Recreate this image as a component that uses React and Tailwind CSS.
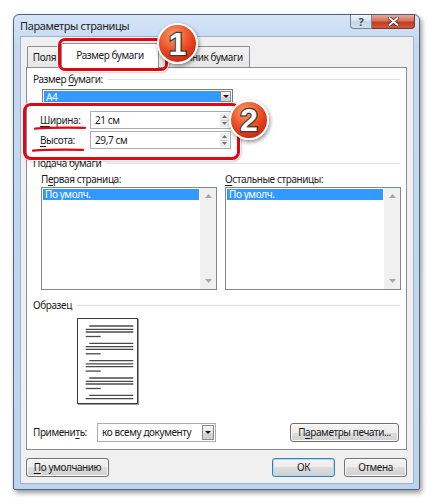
import React from 'react'

// tiny triangle used by scroll bars, spinners and combo boxes
function Tri({ dir = 'down', w = 7, h = 4, color = '#000' }) {
  const pts = dir === 'down' ? `0,0 ${w},0 ${w / 2},${h}` : `0,${h} ${w},${h} ${w / 2},0`
  return (
    <svg width={w} height={h} className="block">
      <polygon points={pts} fill={color} />
    </svg>
  )
}

function U({ children }) {
  return <span className="underline decoration-1 underline-offset-[2px]">{children}</span>
}

function DropBtn({ className = '' }) {
  return (
    <div className={`flex items-center justify-center border border-[#8a8a8a] bg-[linear-gradient(#f6f6f6,#e6e6e6_50%,#d6d6d6_50%,#cdcdcd)] ${className}`}>
      <Tri w={6} h={3} color="#1a1a1a" />
    </div>
  )
}

function Spin() {
  return (
    <div className="my-[1px] mr-[1px] flex w-[9px] flex-col self-stretch">
      <div className="flex flex-1 items-center justify-center bg-[#ededed]">
        <Tri dir="up" w={5} h={3} color="#707070" />
      </div>
      <div className="flex flex-1 items-center justify-center border-t border-[#d4d4d4] bg-[#ededed]">
        <Tri w={5} h={3} color="#707070" />
      </div>
    </div>
  )
}

// group caption followed by an etched line
function Group({ children, className = '' }) {
  return (
    <div className={`flex h-[12px] items-center gap-[5px] px-[6px] ${className}`}>
      <span className="whitespace-nowrap leading-none">{children}</span>
      <div className="h-px flex-1 bg-[#dcdfe3]" />
    </div>
  )
}

function ListBox() {
  return (
    <div className="flex h-[103px] border border-[#828790] bg-white">
      <div className="flex-1 p-[1px]">
        <div className="h-[11px] bg-[#3399ff] pl-[2px] leading-[11px] text-white">По умолч.</div>
      </div>
      <div className="flex w-[16px] flex-col items-center justify-between bg-[#f0f0f0] py-[6px]">
        <Tri dir="up" w={7} h={4} color="#a8a8a8" />
        <Tri w={7} h={4} color="#a8a8a8" />
      </div>
    </div>
  )
}

function Btn({ children, className = '', def = false }) {
  return (
    <div
      className={`flex h-[19px] items-center justify-center rounded-[3px] border bg-[linear-gradient(#f4f4f4,#ececec_50%,#dedede_50%,#d0d0d0)] ${
        def ? 'border-[#3c7fb1] shadow-[inset_0_0_0_1px_#a6dcf6]' : 'border-[#707070] shadow-[inset_0_0_0_1px_#fbfbfb]'
      } ${className}`}
    >
      {children}
    </div>
  )
}

function Badge({ n, className = '' }) {
  return (
    <div
      className={`absolute flex items-center justify-center rounded-full border-2 border-white bg-[radial-gradient(circle_at_40%_28%,#f9a066,#e9481f_50%,#b3130a)] shadow-[1px_2px_4px_rgba(0,0,0,0.45)] ${className}`}
    >
      <span className="font-['Liberation_Sans',sans-serif] text-[32px] font-bold leading-none tracking-normal text-white [-webkit-text-stroke:2.5px_#3a3a3a] [paint-order:stroke_fill]">
        {n}
      </span>
    </div>
  )
}

function Scribble({ className = '' }) {
  return (
    <svg width="52" height="4" className={`absolute ${className}`}>
      <path d="M1 2.6 Q 20 1.2 51 1.8" stroke="#e30613" strokeWidth="2.2" fill="none" strokeLinecap="round" />
    </svg>
  )
}

// preview page with text lines
function SamplePage() {
  const groups = [7, 24.3, 41.6, 59, 76.3]
  return (
    <div className="ml-[50px] mt-[7px] h-[86px] w-[61px] border border-[#3b3b3b] bg-white shadow-[1px_1px_0_#9a9a9a]">
      <svg width="59" height="84" className="block">
        {groups.map((y, i) => (
          <g key={i} stroke="#4a4a4a" strokeWidth="1.3">
            <line x1="11.3" x2="55.3" y1={y} y2={y} />
            <line x1="7.7" x2="55.3" y1={y + 3.3} y2={y + 3.3} />
            {i < 4 && <line x1="7.7" x2="55.3" y1={y + 6} y2={y + 6} />}
            {i < 4 && <line x1="7.7" x2="22.7" y1={y + 10.5} y2={y + 10.5} />}
          </g>
        ))}
      </svg>
    </div>
  )
}

export default function App() {
  return (
    <div className="relative h-[504px] w-[434px] overflow-hidden bg-white pl-[13px] pt-[14px] font-['Noto_Sans',sans-serif] text-[10px] tracking-[-0.4px] text-[#1b1b1b]">
      {/* window frame */}
      <div className="flex h-[476px] w-[407px] flex-col rounded-t-[6px] rounded-b-[2px] border border-[#52627c] bg-[linear-gradient(#d6e5f7,#c4d9f1_30px,#bdd4ef)] shadow-[2px_3px_5px_rgba(0,0,0,0.4)]">
        {/* title bar */}
        <div className="flex h-[21px] shrink-0">
          <span className="pl-[6px] pt-[5px] text-[11px] leading-none text-[#1e1e1e]">Параметры страницы</span>
          <div className="ml-auto mr-[4px] flex h-[14px]">
            <div className="flex w-[22px] items-center justify-center rounded-bl-[4px] border border-t-0 border-[#74839a] bg-[linear-gradient(#eef3f9,#d6e1ee_50%,#c7d5e6_50%,#d3deeb)] text-[11px] font-bold leading-none text-[#3d4f6b]">
              ?
            </div>
            <div className="flex w-[43px] items-center justify-center rounded-br-[4px] border border-l-0 border-t-0 border-[#7a3426] bg-[linear-gradient(#e9a897,#d6725c_45%,#c13c22_55%,#d0593d)]">
              <svg width="11" height="9">
                <path d="M1.5 1 L9.5 8 M9.5 1 L1.5 8" stroke="#3b1a14" strokeWidth="3.4" strokeLinecap="round" />
                <path d="M1.5 1 L9.5 8 M9.5 1 L1.5 8" stroke="#fff" strokeWidth="2" strokeLinecap="round" />
              </svg>
            </div>
          </div>
        </div>

        {/* client area */}
        <div className="mb-[5px] ml-[6px] mr-[5px] flex flex-1 flex-col border border-[#9fb2cb] bg-[#f0f0f0]">
          {/* tabs */}
          <div className="relative flex h-[30px] items-end pl-[6px]">
            <div className="flex h-[21px] w-[35px] items-center justify-center rounded-t-[2px] border border-b-0 border-[#8e8f8f] bg-[linear-gradient(#f3f3f3,#e5e5e5)]">
              Поля
            </div>
            <div className="-mx-[1px] -mb-px flex h-[25px] w-[98px] items-center justify-center rounded-t-[2px] border border-b-0 border-[#8e8f8f] bg-white pb-[1px]">
              Размер бумаги
            </div>
            <div className="flex h-[21px] w-[92px] items-center justify-center rounded-t-[2px] border border-b-0 border-[#8e8f8f] bg-[linear-gradient(#f3f3f3,#e5e5e5)]">
              Источник бумаги
            </div>
          </div>

          {/* tab panel */}
          <div className="ml-[5px] mr-[6px] flex h-[383px] flex-col border border-[#898c95] bg-white">
            <Group className="mt-[5px]">
              Размер <U>б</U>умаги:
            </Group>
            <div className="ml-[15px] mt-[4px] flex h-[15px] w-[191px] border border-[#7a7a7a] bg-white p-[1px]">
              <div className="flex-1 bg-[#3399ff] pl-[2px] leading-[12px] text-white">A4</div>
              <DropBtn className="w-[11px]" />
            </div>

            <div className="ml-[13px] mt-[7px] flex h-[18px] items-center">
              <span className="w-[50px]">
                <U>Ш</U>ирина:
              </span>
              <div className="flex h-full w-[141px] items-center border border-[#abadb3] bg-white">
                <span className="flex-1 pl-[4px]">21 см</span>
                <Spin />
              </div>
            </div>
            <div className="ml-[13px] mt-[2px] flex h-[18px] items-center">
              <span className="w-[50px]">
                <U>В</U>ысота:
              </span>
              <div className="flex h-full w-[141px] items-center border border-[#abadb3] bg-white">
                <span className="flex-1 pl-[4px]">29,7 см</span>
                <Spin />
              </div>
            </div>

            <Group className="mt-[8px]">Подача бумаги</Group>
            <div className="mt-[4px] grid grid-cols-2 gap-[8px] pl-[14px] pr-[5px]">
              <div className="flex flex-col gap-[2px]">
                <span className="h-[12px] leading-[12px]">
                  П<U>е</U>рвая страница:
                </span>
                <ListBox />
              </div>
              <div className="flex flex-col gap-[2px]">
                <span className="h-[12px] leading-[12px]">
                  <U>О</U>стальные страницы:
                </span>
                <ListBox />
              </div>
            </div>

            <Group className="mt-[9px]">Образец</Group>
            <SamplePage />

            <div className="mb-[7px] mt-auto flex h-[19px] items-center pl-[6px] pr-[7px]">
              <span className="w-[64px]">
                Примени<U>т</U>ь:
              </span>
              <div className="flex h-full w-[119px] items-center border border-[#abadb3] bg-white p-[1px]">
                <span className="flex-1 pl-[3px]">ко всему документу</span>
                <DropBtn className="h-[15px] w-[12px]" />
              </div>
              <Btn className="ml-auto w-[109px]">
                П<U>а</U>раметры печати...
              </Btn>
            </div>
          </div>

          {/* dialog buttons */}
          <div className="flex pl-[5px] pr-[6px] pt-[8px]">
            <Btn className="w-[83px]">
              <U>П</U>о умолчанию
            </Btn>
            <Btn def className="ml-auto w-[63px]">
              ОК
            </Btn>
            <Btn className="ml-[9px] w-[63px]">Отмена</Btn>
          </div>
        </div>
      </div>

      {/* red markup drawn over the dialog */}
      <div className="absolute left-[58px] top-[38px] h-[33px] w-[110px] rounded-[7px] border-[3px] border-[#e30613] shadow-[0_0_0_1px_rgba(255,255,255,0.9),1px_1px_3px_rgba(0,0,0,0.35)]" />
      <Badge n="1" className="left-[157px] top-[23px] h-[41px] w-[41px]" />
      <div className="absolute left-[23px] top-[103px] h-[57px] w-[217px] rounded-[8px] border-[3px] border-[#e30613] shadow-[0_0_0_1px_rgba(255,255,255,0.9),1px_1px_3px_rgba(0,0,0,0.35)]" />
      <Badge n="2" className="left-[229px] top-[100px] h-[40px] w-[40px]" />
      <Scribble className="left-[34px] top-[126px]" />
      <Scribble className="left-[32px] top-[148px]" />
    </div>
  )
}
